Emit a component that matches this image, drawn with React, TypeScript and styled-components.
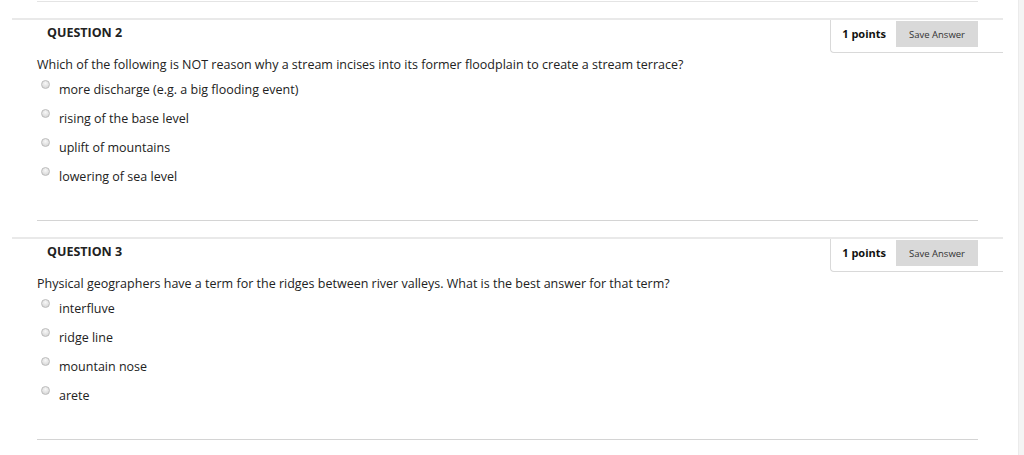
import React from "react";
import styled, { createGlobalStyle } from "styled-components";

const GlobalStyle = createGlobalStyle`
  html, body {
    margin: 0;
    padding: 0;
    background: #ffffff;
  }
  body {
    font-family: "Open Sans", "Noto Sans", sans-serif;
    color: #222222;
  }
  * { box-sizing: border-box; }
`;

const Page = styled.div`
  display: flex;
  width: 1024px;
  height: 455px;
  overflow: hidden;
`;

const Main = styled.div`
  flex: 1;
  padding: 0 15px 0 12px;
`;

const Scrollbar = styled.div`
  width: 6px;
  background: #f4f4f4;
  border-left: 1px solid #ebebeb;
`;

const PrevEnd = styled.div`
  margin: 1px 25px 0;
  border-top: 1px solid #e4e4e4;
`;

const Block = styled.section`
  margin-top: 16px;
  border-top: 2px solid #e9e9e9;
`;

const Header = styled.div`
  display: flex;
  justify-content: space-between;
  align-items: flex-start;
`;

const Title = styled.h3`
  margin: 0;
  padding: 4px 0 0 35px;
  font-size: 12.5px;
  line-height: 18px;
  font-weight: 700;
  color: #222222;
`;

const PointsBox = styled.div`
  display: flex;
  align-items: center;
  gap: 10px;
  padding: 1px 25px 5px 11px;
  border-left: 1px solid #d9d9d9;
  border-bottom: 1px solid #d9d9d9;
  border-bottom-left-radius: 4px;
`;

const Points = styled.span`
  font-size: 11px;
  line-height: 14px;
  font-weight: 700;
  color: #111111;
  margin-top: -1px;
`;

const SaveButton = styled.button`
  height: 26px;
  width: 82px;
  padding: 0;
  border: none;
  background: #d9d9d9;
  font-family: "Open Sans", "Noto Sans", sans-serif;
  font-size: 9.5px;
  color: #333333;
  cursor: pointer;
`;

const Body = styled.div`
  margin: 0 25px;
  padding: 3px 0 30px;
  border-bottom: 1px solid #d4d4d4;
`;

const Prompt = styled.p`
  margin: 0;
  font-size: 12.5px;
  line-height: 18px;
  color: #222222;
`;

const Options = styled.ul`
  list-style: none;
  margin: 0;
  padding: 0;
`;

const OptionRow = styled.li`
  display: flex;
  align-items: flex-start;
  height: 29px;
  padding-left: 4px;
`;

const Radio = styled.span`
  flex: none;
  width: 9px;
  height: 9px;
  margin-top: 6px;
  border-radius: 50%;
  border: 1px solid #bcbcbc;
  background: radial-gradient(circle at 50% 35%, #f8f8f8 0%, #e2e2e2 55%, #cdcdcd 100%);
`;

const OptionLabel = styled.span`
  margin: 7px 0 0 9px;
  font-size: 12.5px;
  line-height: 18px;
  color: #222222;
`;

type Q = { title: string; prompt: string; options: string[] };

const questions: Q[] = [
  {
    title: "QUESTION 2",
    prompt:
      "Which of the following is NOT reason why a stream incises into its former floodplain to create a stream terrace?",
    options: [
      "more discharge (e.g. a big flooding event)",
      "rising of the base level",
      "uplift of mountains",
      "lowering of sea level",
    ],
  },
  {
    title: "QUESTION 3",
    prompt:
      "Physical geographers have a term for the ridges between river valleys. What is the best answer for that term?",
    options: ["interfluve", "ridge line", "mountain nose", "arete"],
  },
];

const Question: React.FC<{ q: Q }> = ({ q }) => (
  <Block>
    <Header>
      <Title>{q.title}</Title>
      <PointsBox>
        <Points>1 points</Points>
        <SaveButton>Save Answer</SaveButton>
      </PointsBox>
    </Header>
    <Body>
      <Prompt>{q.prompt}</Prompt>
      <Options>
        {q.options.map((o) => (
          <OptionRow key={o}>
            <Radio />
            <OptionLabel>{o}</OptionLabel>
          </OptionRow>
        ))}
      </Options>
    </Body>
  </Block>
);

export default function App() {
  return (
    <>
      <GlobalStyle />
      <Page>
        <Main>
          <PrevEnd />
          {questions.map((q) => (
            <Question key={q.title} q={q} />
          ))}
        </Main>
        <Scrollbar />
      </Page>
    </>
  );
}
